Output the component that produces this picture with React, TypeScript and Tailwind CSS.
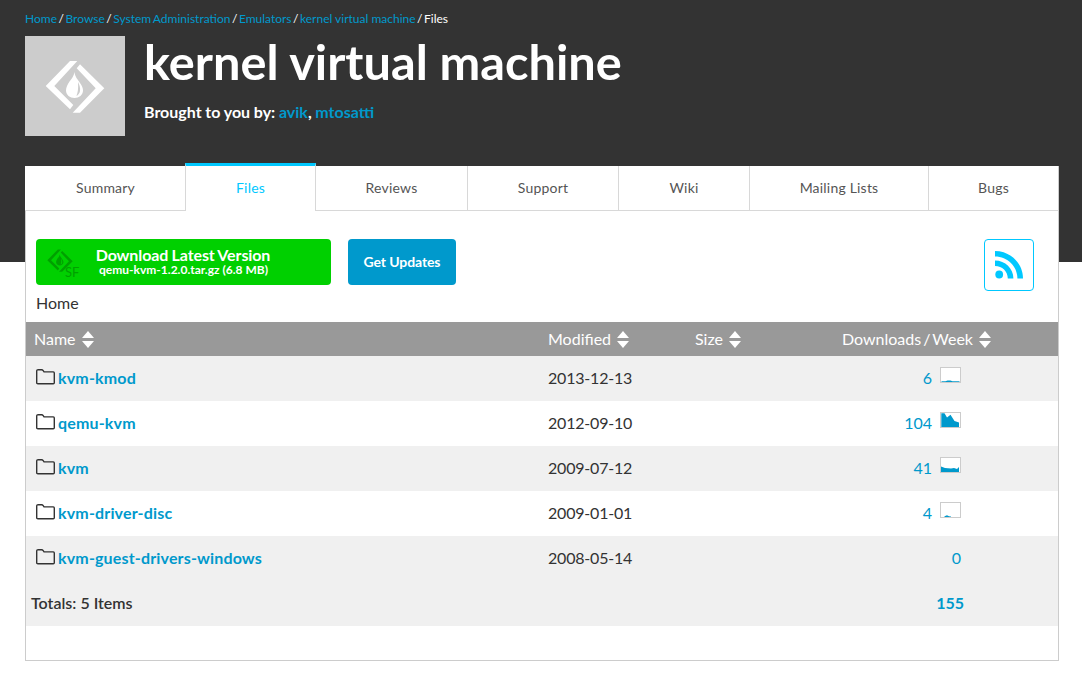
import React from "react";

const crumbs = ["Home", "Browse", "System Administration", "Emulators", "kernel virtual machine"];
const tabs: [string, string][] = [
  ["Summary", "w-[160px] pl-[1px]"],
  ["Files", "w-[131px]"],
  ["Reviews", "w-[152px]"],
  ["Support", "w-[151px]"],
  ["Wiki", "w-[131px]"],
  ["Mailing Lists", "w-[179px]"],
  ["Bugs", "w-[130px]"],
];

function SfLogo({ className, color, cut }: { className: string; color: string; cut: string }) {
  return (
    <svg viewBox="20 24 60 53" className={className}>
      <path d="M45 25h7.300L29.300 50l19 19-3.300 4.300L20.700 50z" fill={color} />
      <path d="M55 28.300l24.300 24L55 76.700h-7.300l23-24.400-19-20z" fill={color} />
      <path d="M49.500 36c.5 5 3 7 5.500 11 2 3 3 5 3 7.500C58 59 54 62 49.500 62S41 59 41 54.500c0-3 1.500-6 3.500-9 2.500-3 4.500-6 5-9.500z" fill={color} />
      <path d="M53 46c1.500 3 2.500 6 2 9-.4 2.500-2 4-3.500 5 1-3 2-6 1.500-14z" fill={cut} />
    </svg>
  );
}

function SortIcon() {
  return (
    <svg viewBox="0 0 12 17" className="w-[12px] h-[17px] ml-[6px] shrink-0" fill="#fff">
      <path d="M6 0l6 7H0z" />
      <path d="M6 17l6-7H0z" />
    </svg>
  );
}

function Folder() {
  return (
    <svg viewBox="0 0 19 16" className="w-[19px] h-[16px] ml-[1px] mb-[2px] shrink-0" fill="none" stroke="#333" strokeWidth="1.4">
      <path d="M.7 13.800V2.200C.7 1.300 1.300.7 2.200.7h3.400c.8 0 1.200.4 1.600 1l.8 1.200h9.300c.6 0 1 .5 1 1.100v9.800c0 .6-.4 1-1 1H1.900c-.7 0-1.200-.4-1.200-1z" />
    </svg>
  );
}

function Spark({ d }: { d: string }) {
  return (
    <svg viewBox="1 1 19 14" className="w-[21px] h-[16px] shrink-0 ml-[8px] mb-[6px] border border-[#ccc] bg-white">
      <path d={d} fill="#0099cc" />
    </svg>
  );
}

const rows = [
  { name: "kvm-kmod", date: "2013-12-13", dl: "6", spark: "M1.500 14.200h4l2-.6 3 0 2 .6h7V15H1.500z", bg: "bg-[#f0f0f0]" },
  { name: "qemu-kvm", date: "2012-09-10", dl: "104", spark: "M1.300 1.300h3.200L7 5.500l3.500-2.800 4 6.300L19 10.500V15H1.300z", bg: "bg-white" },
  { name: "kvm", date: "2009-07-12", dl: "41", spark: "M1 9.500L5 11l6 .5 3-.5 3 1 2-2v5H1z", bg: "bg-[#f0f0f0]" },
  { name: "kvm-driver-disc", date: "2009-01-01", dl: "4", spark: "M4.500 14.200L7 13.200l2 1L11 14.500V15H4.500z", bg: "bg-white" },
  { name: "kvm-guest-drivers-windows", date: "2008-05-14", dl: "0", spark: "", bg: "bg-[#f0f0f0]" },
];

export default function App() {
  return (
    <div className="min-h-[689px] bg-white font-['Lato','Liberation_Sans',sans-serif] text-[#333]">
      <header className="h-[262px] bg-[#333] px-[25px] pt-[12px]">
        <nav className="flex items-center h-[14px] text-[12px] leading-[14px] [word-spacing:-1px] text-[#0099cc]">
          {crumbs.map((c, i) => (
            <React.Fragment key={c}>
              <a className={i === 4 ? "[word-spacing:0px]" : ""}>{c}</a>
              <span className="text-white mx-[1.500px]">/</span>
            </React.Fragment>
          ))}
          <span className="text-white">Files</span>
        </nav>
        <div className="flex mt-[10px]">
          <div className="w-[100px] h-[100px] bg-[#ccc] flex items-center justify-center">
            <SfLogo className="w-[60px] h-[53px]" color="#fff" cut="#ccc" />
          </div>
          <div className="ml-[19px]">
            <h1 className="text-[48.700px] leading-[52px] font-bold text-white mt-[-1px]">kernel virtual machine</h1>
            <p className="mt-[14px] text-[16px] leading-[22px] font-bold text-white [word-spacing:-0.2px]">
              Brought to you by: <a className="text-[#0099cc]">avik</a>, <a className="text-[#0099cc]">mtosatti</a>
            </p>
          </div>
        </div>
      </header>

      <main className="ml-[25px] w-[1034px] mt-[-96px] h-[495px] relative">
        <div className="flex h-[45px] items-stretch">
          {tabs.map(([t, w], i) => (
            <div
              key={t}
              className={
                i === 1
                  ? `${w} bg-white border-t-[3px] border-t-[#00c8ff] mt-[-3px] h-[48px] border-r border-l border-[#d8d8d8] border-b-0 flex items-center justify-center pb-[2px] text-[14px] tracking-[0.2px] text-[#00c8ff]`
                  : `${w} bg-white border-b border-[#d8d8d8] flex items-center justify-center pb-[2px] text-[14px] tracking-[0.2px] text-[#555] ${i === 6 ? "border-r border-r-[#ccc]" : i === 0 ? "" : "border-r"}`
              }
            >
              {t}
            </div>
          ))}
        </div>
        <div className="h-[450px] bg-white border border-t-0 border-[#ccc]">
          <div className="flex items-start px-[10px] pt-[28px] h-[80px]">
            <button className="w-[295px] h-[46px] rounded-[4px] bg-[#00d000] relative text-white font-bold flex flex-col items-center">
              <SfLogo className="absolute left-[11px] top-[10px] w-[26px] h-[23px]" color="#00a000" cut="#00d000" />
              <span className="absolute left-[29px] top-[27px] text-[13px] leading-[13px] font-normal text-[#00a000]">SF</span>
              <span className="mt-[7px] text-[16px] leading-[17px] ml-[-1px] tracking-[-0.1px] [word-spacing:-0.5px]">Download Latest Version</span>
              <span className="text-[12px] leading-[13px]">qemu-kvm-1.2.0.tar.gz (6.8 MB)</span>
            </button>
            <button className="ml-[17px] w-[108px] h-[46px] rounded-[4px] bg-[#0099cc] text-white font-bold text-[14px] pb-[2px] tracking-[-0.1px]">
              Get Updates
            </button>
            <a className="ml-auto mr-[14px] w-[50px] h-[52px] rounded-[4px] border border-[#00c8ff] flex items-center justify-center">
              <svg viewBox="0 0 28 28" className="w-[28px] h-[28px]" fill="#00c8ff">
                <circle cx="4.200" cy="23.500" r="3.900" />
                <path d="M0 9.500v5.600c7.200 0 12.800 5.500 12.800 12.400h5.600C18.400 17.500 10.200 9.500 0 9.500z" />
                <path d="M0 0v5.600c12.500 0 22.400 9.800 22.400 21.900H28C28 12.300 15.500 0 0 0z" />
              </svg>
            </a>
          </div>
          <div className="ml-[10px] h-[25px] text-[16px] leading-[23px]">Home</div>

          <div className="grid grid-cols-[514px_147px_147px_1fr] h-[34px] mt-[6px] bg-[#999] text-white text-[16px] items-center">
            <div className="flex items-center pl-[8px]">Name<SortIcon /></div>
            <div className="flex items-center pl-[8px]">Modified<SortIcon /></div>
            <div className="flex items-center pl-[8px]">Size<SortIcon /></div>
            <div className="flex items-center justify-end pr-[67px] [word-spacing:-2px]">Downloads / Week<SortIcon /></div>
          </div>

          {rows.map((r) => (
            <div key={r.name} className={`grid grid-cols-[514px_147px_147px_1fr] h-[45px] pb-[1px] items-center text-[16px] ${r.bg}`}>
              <div className="flex items-center pl-[9px]">
                <Folder />
                <a className="ml-[3px] font-bold tracking-[0.16px] text-[#0099cc]">{r.name}</a>
              </div>
              <div className="pl-[8px] tracking-[-0.2px]">{r.date}</div>
              <div />
              <div className="flex items-center justify-end pr-[97px] text-[#0099cc]">
                <span>{r.dl}</span>
                {r.spark ? <Spark d={r.spark} /> : null}
              </div>
            </div>
          ))}
          <div className="grid grid-cols-[514px_147px_147px_1fr] h-[45px] pb-[1px] items-center text-[16px] bg-[#f0f0f0]">
            <div className="pl-[5px] font-semibold">Totals: 5 Items</div>
            <div />
            <div />
            <div className="text-right pr-[94px] font-bold text-[#0099cc]">155</div>
          </div>
        </div>
      </main>
    </div>
  );
}
